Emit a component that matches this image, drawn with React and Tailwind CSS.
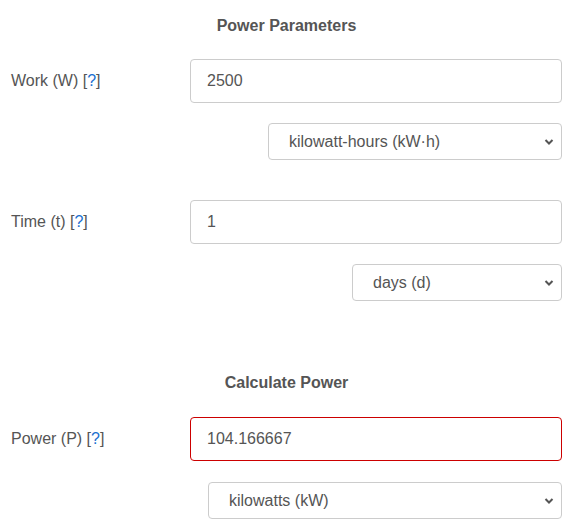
const Chevron = () => (
    <svg
        className="pointer-events-none absolute right-[8px] top-1/2 -translate-y-1/2"
        width="10"
        height="7"
        viewBox="0 0 10 7"
    >
        <path d="M1.5 1.5L5 5l3.5-3.5" fill="none" stroke="#555" strokeWidth="2" />
    </svg>
);

const UnitSelect = ({ width, value, options, gap = "mt-[20px]" }) => (
    <div className={`flex justify-end ${gap}`}>
        <div className={`relative ${width}`}>
            <select
                defaultValue={value}
                className="w-full h-[37px] appearance-none rounded-[4px] border border-[#ccc] bg-white pl-[20px] pr-6 text-[16px] text-[#555] outline-none"
            >
                {options.map((o) => (
                    <option key={o}>{o}</option>
                ))}
            </select>
            <Chevron />
        </div>
    </div>
);

const FieldRow = ({ label, symbol, value, error }) => (
    <div className="flex items-center">
        <label className="w-[179px] text-[16px] text-[#555]">
            {label} ({symbol}) [<span className="text-[#1a6fd0]">?</span>]
        </label>
        <input
            defaultValue={value}
            className={`flex-1 h-[44px] rounded-[4px] border bg-white pl-[16px] text-[16px] text-[#555] outline-none ${
                error ? "border-[#cc0000]" : "border-[#ccc]"
            }`}
        />
    </div>
);

export default function App() {
    return (
        <div
            className="w-[573px] min-h-[531px] bg-white px-[11px] pt-[17px]"
            style={{ fontFamily: '"Liberation Sans", Arial, sans-serif' }}
        >
            <h3 className="text-center text-[16px] leading-[18px] font-bold text-[#555]">
                Power Parameters
            </h3>

            <div className="mt-[24px]">
                <FieldRow label="Work" symbol="W" value="2500" />
                <UnitSelect
                    width="w-[294px]"
                    value="kilowatt-hours (kW·h)"
                    options={["joules (J)", "kilowatt-hours (kW·h)", "watt-hours (W·h)"]}
                />
            </div>

            <div className="mt-[40px]">
                <FieldRow label="Time" symbol="t" value="1" />
                <UnitSelect
                    width="w-[210px]"
                    value="days (d)"
                    options={["seconds (s)", "minutes (min)", "hours (h)", "days (d)"]}
                />
            </div>

            <h3 className="mt-[73px] text-center text-[16px] leading-[18px] font-bold text-[#555]">
                Calculate Power
            </h3>

            <div className="mt-[25px]">
                <FieldRow label="Power" symbol="P" value="104.166667" error />
                <UnitSelect
                    width="w-[354px]"
                    value="kilowatts (kW)"
                    options={["watts (W)", "kilowatts (kW)", "megawatts (MW)"]}
                    gap="mt-[21px]"
                />
            </div>
        </div>
    );
}
